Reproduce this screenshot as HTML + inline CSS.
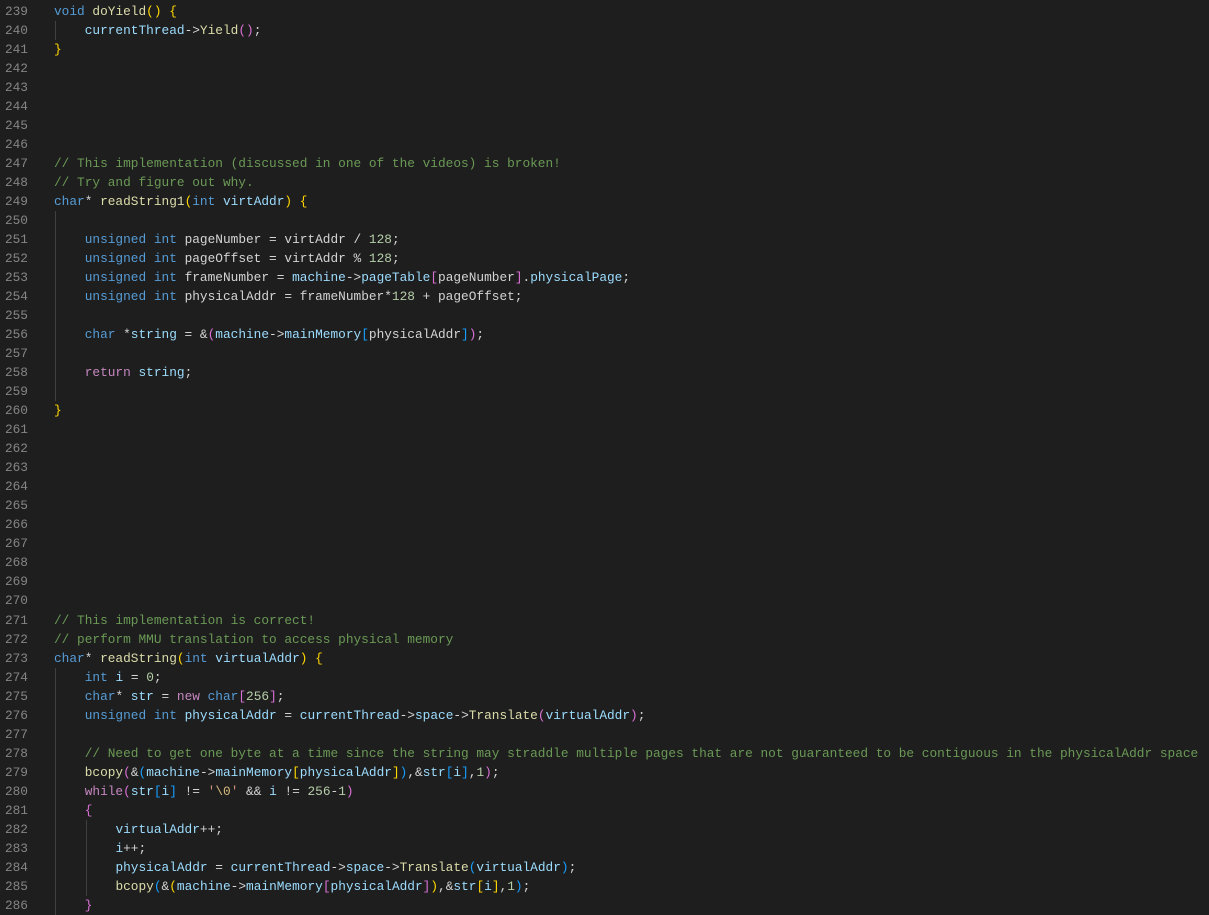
<!DOCTYPE html>
<html><head><meta charset="utf-8"><style>
html,body{margin:0;padding:0;background:#1e1e1e;width:1209px;height:913px;overflow:hidden}
.ed{position:absolute;top:2px;left:0;width:1209px;font-family:"Liberation Mono",monospace;font-size:12.8px;line-height:19.02px;color:#d4d4d4}
.l{height:19.02px;position:relative}
.n{position:absolute;left:0;width:28px;text-align:right;color:#858585}
.c{position:absolute;left:54px;white-space:pre}
.g{position:absolute;top:0;width:1px;height:19.02px;background:#404040}
.k{color:#569cd6}.p{color:#c586c0}.f{color:#dcdcaa}.v{color:#9cdcfe}.m{color:#b5cea8}.cm{color:#6a9955}.s{color:#ce9178}.e{color:#d7ba7d}
.b1{color:#ffd700}.b2{color:#da70d6}.b3{color:#179fff}
</style></head><body><div class="ed">
<div class="l"><span class="n">239</span><span class="c"><span class="k">void</span> <span class="f">doYield</span><span class="b1">()</span> <span class="b1">{</span></span></div>
<div class="l"><span class="n">240</span><i class="g" style="left:55px"></i><span class="c">    <span class="v">currentThread</span>-&gt;<span class="f">Yield</span><span class="b2">()</span>;</span></div>
<div class="l"><span class="n">241</span><span class="c"><span class="b1">}</span></span></div>
<div class="l"><span class="n">242</span></div>
<div class="l"><span class="n">243</span></div>
<div class="l"><span class="n">244</span></div>
<div class="l"><span class="n">245</span></div>
<div class="l"><span class="n">246</span></div>
<div class="l"><span class="n">247</span><span class="c cm">// This implementation (discussed in one of the videos) is broken!</span></div>
<div class="l"><span class="n">248</span><span class="c cm">// Try and figure out why.</span></div>
<div class="l"><span class="n">249</span><span class="c"><span class="k">char</span>* <span class="f">readString1</span><span class="b1">(</span><span class="k">int</span> <span class="v">virtAddr</span><span class="b1">)</span> <span class="b1">{</span></span></div>
<div class="l"><span class="n">250</span><i class="g" style="left:55px"></i></div>
<div class="l"><span class="n">251</span><i class="g" style="left:55px"></i><span class="c">    <span class="k">unsigned</span> <span class="k">int</span> pageNumber = virtAddr / <span class="m">128</span>;</span></div>
<div class="l"><span class="n">252</span><i class="g" style="left:55px"></i><span class="c">    <span class="k">unsigned</span> <span class="k">int</span> pageOffset = virtAddr % <span class="m">128</span>;</span></div>
<div class="l"><span class="n">253</span><i class="g" style="left:55px"></i><span class="c">    <span class="k">unsigned</span> <span class="k">int</span> frameNumber = <span class="v">machine</span>-&gt;<span class="v">pageTable</span><span class="b2">[</span>pageNumber<span class="b2">]</span>.<span class="v">physicalPage</span>;</span></div>
<div class="l"><span class="n">254</span><i class="g" style="left:55px"></i><span class="c">    <span class="k">unsigned</span> <span class="k">int</span> physicalAddr = frameNumber*<span class="m">128</span> + pageOffset;</span></div>
<div class="l"><span class="n">255</span><i class="g" style="left:55px"></i></div>
<div class="l"><span class="n">256</span><i class="g" style="left:55px"></i><span class="c">    <span class="k">char</span> *<span class="v">string</span> = &amp;<span class="b2">(</span><span class="v">machine</span>-&gt;<span class="v">mainMemory</span><span class="b3">[</span>physicalAddr<span class="b3">]</span><span class="b2">)</span>;</span></div>
<div class="l"><span class="n">257</span><i class="g" style="left:55px"></i></div>
<div class="l"><span class="n">258</span><i class="g" style="left:55px"></i><span class="c">    <span class="p">return</span> <span class="v">string</span>;</span></div>
<div class="l"><span class="n">259</span><i class="g" style="left:55px"></i></div>
<div class="l"><span class="n">260</span><span class="c"><span class="b1">}</span></span></div>
<div class="l"><span class="n">261</span></div>
<div class="l"><span class="n">262</span></div>
<div class="l"><span class="n">263</span></div>
<div class="l"><span class="n">264</span></div>
<div class="l"><span class="n">265</span></div>
<div class="l"><span class="n">266</span></div>
<div class="l"><span class="n">267</span></div>
<div class="l"><span class="n">268</span></div>
<div class="l"><span class="n">269</span></div>
<div class="l"><span class="n">270</span></div>
<div class="l"><span class="n">271</span><span class="c cm">// This implementation is correct!</span></div>
<div class="l"><span class="n">272</span><span class="c cm">// perform MMU translation to access physical memory</span></div>
<div class="l"><span class="n">273</span><span class="c"><span class="k">char</span>* <span class="f">readString</span><span class="b1">(</span><span class="k">int</span> <span class="v">virtualAddr</span><span class="b1">)</span> <span class="b1">{</span></span></div>
<div class="l"><span class="n">274</span><i class="g" style="left:55px"></i><span class="c">    <span class="k">int</span> <span class="v">i</span> = <span class="m">0</span>;</span></div>
<div class="l"><span class="n">275</span><i class="g" style="left:55px"></i><span class="c">    <span class="k">char</span>* <span class="v">str</span> = <span class="p">new</span> <span class="k">char</span><span class="b2">[</span><span class="m">256</span><span class="b2">]</span>;</span></div>
<div class="l"><span class="n">276</span><i class="g" style="left:55px"></i><span class="c">    <span class="k">unsigned</span> <span class="k">int</span> <span class="v">physicalAddr</span> = <span class="v">currentThread</span>-&gt;<span class="v">space</span>-&gt;<span class="f">Translate</span><span class="b2">(</span><span class="v">virtualAddr</span><span class="b2">)</span>;</span></div>
<div class="l"><span class="n">277</span><i class="g" style="left:55px"></i></div>
<div class="l"><span class="n">278</span><i class="g" style="left:55px"></i><span class="c">    <span class="cm">// Need to get one byte at a time since the string may straddle multiple pages that are not guaranteed to be contiguous in the physicalAddr space</span></span></div>
<div class="l"><span class="n">279</span><i class="g" style="left:55px"></i><span class="c">    <span class="f">bcopy</span><span class="b2">(</span>&amp;<span class="b3">(</span><span class="v">machine</span>-&gt;<span class="v">mainMemory</span><span class="b1">[</span><span class="v">physicalAddr</span><span class="b1">]</span><span class="b3">)</span>,&amp;<span class="v">str</span><span class="b3">[</span><span class="v">i</span><span class="b3">]</span>,<span class="m">1</span><span class="b2">)</span>;</span></div>
<div class="l"><span class="n">280</span><i class="g" style="left:55px"></i><span class="c">    <span class="p">while</span><span class="b2">(</span><span class="v">str</span><span class="b3">[</span><span class="v">i</span><span class="b3">]</span> != <span class="s">'<span class="e">\0</span>'</span> &amp;&amp; <span class="v">i</span> != <span class="m">256</span>-<span class="m">1</span><span class="b2">)</span></span></div>
<div class="l"><span class="n">281</span><i class="g" style="left:55px"></i><span class="c">    <span class="b2">{</span></span></div>
<div class="l"><span class="n">282</span><i class="g" style="left:55px"></i><i class="g" style="left:86px"></i><span class="c">        <span class="v">virtualAddr</span>++;</span></div>
<div class="l"><span class="n">283</span><i class="g" style="left:55px"></i><i class="g" style="left:86px"></i><span class="c">        <span class="v">i</span>++;</span></div>
<div class="l"><span class="n">284</span><i class="g" style="left:55px"></i><i class="g" style="left:86px"></i><span class="c">        <span class="v">physicalAddr</span> = <span class="v">currentThread</span>-&gt;<span class="v">space</span>-&gt;<span class="f">Translate</span><span class="b3">(</span><span class="v">virtualAddr</span><span class="b3">)</span>;</span></div>
<div class="l"><span class="n">285</span><i class="g" style="left:55px"></i><i class="g" style="left:86px"></i><span class="c">        <span class="f">bcopy</span><span class="b3">(</span>&amp;<span class="b1">(</span><span class="v">machine</span>-&gt;<span class="v">mainMemory</span><span class="b2">[</span><span class="v">physicalAddr</span><span class="b2">]</span><span class="b1">)</span>,&amp;<span class="v">str</span><span class="b1">[</span><span class="v">i</span><span class="b1">]</span>,<span class="m">1</span><span class="b3">)</span>;</span></div>
<div class="l"><span class="n">286</span><i class="g" style="left:55px"></i><span class="c">    <span class="b2">}</span></span></div>
</div></body></html>
